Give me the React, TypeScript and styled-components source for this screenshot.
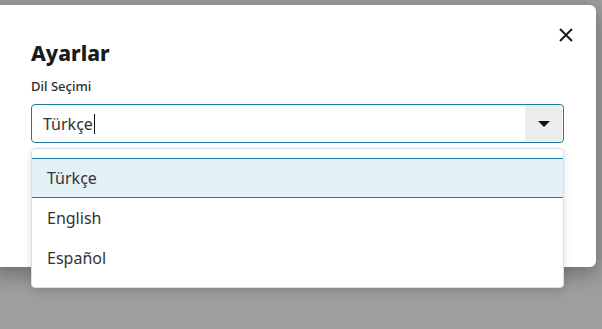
import React, { useState } from 'react';
import styled, { createGlobalStyle } from 'styled-components';

const GlobalStyle = createGlobalStyle`
    html, body {
        margin: 0;
        padding: 0;
        background: #9e9e9e;
        font-family: "Noto Sans", "Open Sans", sans-serif;
        overflow: hidden;
    }
`;

const Backdrop = styled.div`
    width: 602px;
    height: 329px;
    padding-top: 5px;
    box-sizing: border-box;
    background: #9e9e9e;
`;

const Modal = styled.div`
    position: relative;
    margin-left: -10px;
    width: 606px;
    height: 262px;
    box-sizing: border-box;
    padding: 33px 32px 0 41px;
    background: #ffffff;
    border-radius: 6px;
    box-shadow: 0 6px 22px rgba(0, 0, 0, 0.35);
`;

const CloseButton = styled.button`
    position: absolute;
    top: 16px;
    right: 16px;
    width: 28px;
    height: 28px;
    padding: 0;
    border: none;
    background: transparent;
    display: flex;
    align-items: center;
    justify-content: center;
    cursor: pointer;
`;

const Title = styled.h2`
    margin: 0;
    font-size: 21px;
    line-height: 30px;
    font-weight: 800;
    color: #1b1b1b;
`;

const Label = styled.label`
    display: block;
    margin-top: 9px;
    font-size: 13px;
    line-height: 18px;
    font-weight: 500;
    color: #2e2e2e;
`;

const Field = styled.div`
    position: relative;
    margin-top: 9px;
`;

const InputBox = styled.div`
    display: flex;
    align-items: center;
    height: 39px;
    box-sizing: border-box;
    border: 1px solid #1a7aa0;
    border-radius: 4px;
    padding: 1px 1px 1px 11px;
`;

const InputText = styled.span`
    flex: 1;
    font-size: 16px;
    color: #333;
    display: flex;
    align-items: center;
`;

const Caret = styled.span`
    display: inline-block;
    width: 1px;
    height: 20px;
    margin-left: 1px;
    background: #111;
`;

const ToggleButton = styled.span`
    width: 37px;
    height: 35px;
    background: #ececec;
    border-radius: 0 3px 3px 0;
    display: flex;
    align-items: center;
    justify-content: center;
`;

const Menu = styled.ul`
    position: absolute;
    top: 44px;
    left: 0;
    right: 0;
    margin: 0;
    padding: 9px 0;
    list-style: none;
    background: #fff;
    border: 1px solid #dedede;
    border-radius: 4px;
    box-shadow: 0 3px 8px rgba(0, 0, 0, 0.12);
`;

const Option = styled.li<{ $active?: boolean }>`
    height: 40px;
    box-sizing: border-box;
    display: flex;
    align-items: center;
    padding-left: 15px;
    font-size: 16px;
    color: #333;
    background: ${p => (p.$active ? '#e3f0f6' : 'transparent')};
    border-top: 1px solid ${p => (p.$active ? '#1a7aa0' : 'transparent')};
    border-bottom: 1px solid ${p => (p.$active ? '#1a7aa0' : 'transparent')};
`;

const languages = ['Türkçe', 'English', 'Español'];

export default function App() {
    const [selected] = useState('Türkçe');

    return (
        <>
            <GlobalStyle />
            <Backdrop>
                <Modal>
                    <CloseButton aria-label="Kapat">
                        <svg width="14" height="14" viewBox="0 0 14 14">
                            <path d="M1 1 L13 13 M13 1 L1 13" stroke="#1b1b1b" strokeWidth="2" />
                        </svg>
                    </CloseButton>
                    <Title>Ayarlar</Title>
                    <Label>Dil Seçimi</Label>
                    <Field>
                        <InputBox>
                            <InputText>
                                {selected}
                                <Caret />
                            </InputText>
                            <ToggleButton>
                                <svg width="12" height="6" viewBox="0 0 12 6">
                                    <path d="M0 0 H12 L6 6 Z" fill="#111" />
                                </svg>
                            </ToggleButton>
                        </InputBox>
                        <Menu>
                            {languages.map(lang => (
                                <Option key={lang} $active={lang === selected}>
                                    {lang}
                                </Option>
                            ))}
                        </Menu>
                    </Field>
                </Modal>
            </Backdrop>
        </>
    );
}
